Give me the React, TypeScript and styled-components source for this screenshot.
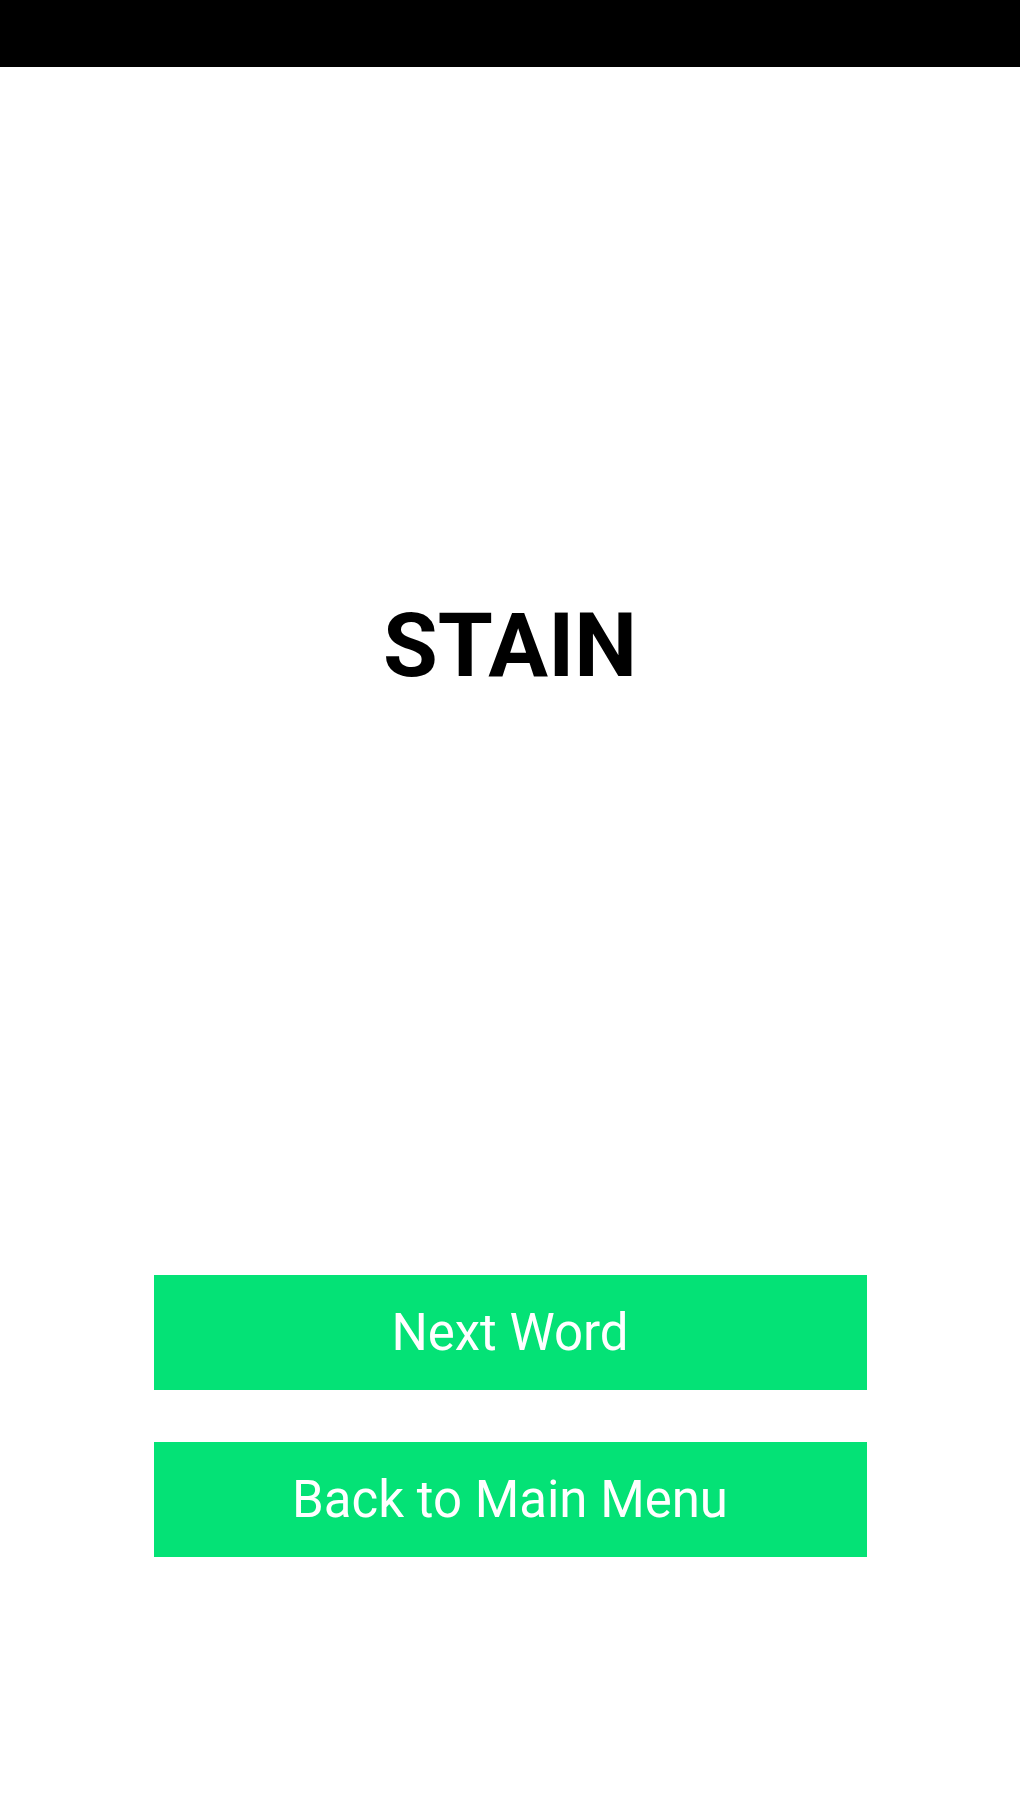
import React from 'react';
import styled, { createGlobalStyle } from 'styled-components';

const GlobalStyle = createGlobalStyle`
  html, body {
    margin: 0;
    padding: 0;
    background: #fff;
  }
  body {
    font-family: Roboto, 'Liberation Sans', sans-serif;
  }
`;

const Screen = styled.div`
  display: flex;
  flex-direction: column;
  width: 100%;
  min-height: 100vh;
  background-color: #fff;
`;

const StatusBar = styled.div`
  height: 67px;
  background-color: #000;
  flex-shrink: 0;
`;

const Content = styled.main`
  display: flex;
  flex-direction: column;
  align-items: center;
`;

const Word = styled.h1`
  margin: 534px 0 0 0;
  font-family: Roboto, 'Liberation Sans', sans-serif;
  font-weight: 700;
  font-size: 89px;
  line-height: 1;
  color: #000;
  letter-spacing: 0;
`;

const Buttons = styled.div`
  display: flex;
  flex-direction: column;
  gap: 52px;
  width: 713px;
  margin-top: 585px;
`;

const MenuButton = styled.button`
  display: flex;
  align-items: center;
  justify-content: center;
  height: 115px;
  width: 100%;
  border: none;
  border-radius: 0;
  padding: 0;
  background-color: #04e276;
  color: #fff;
  font-family: Roboto, 'Liberation Sans', sans-serif;
  font-size: 51px;
  font-weight: 400;
  cursor: pointer;
`;

const App = () => {
  const word = 'STAIN';

  return (
    <>
      <GlobalStyle />
      <Screen>
        <StatusBar />
        <Content>
          <Word>{word}</Word>
          <Buttons>
            <MenuButton>Next Word</MenuButton>
            <MenuButton>Back to Main Menu</MenuButton>
          </Buttons>
        </Content>
      </Screen>
    </>
  );
};

export default App;
